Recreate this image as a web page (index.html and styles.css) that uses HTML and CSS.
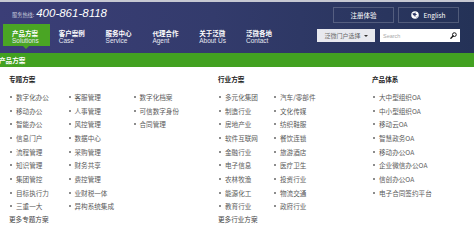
FILE: index.html
```html
<!DOCTYPE html>
<html lang="zh-CN">
<head>
    <meta charset="UTF-8">
    <meta name="viewport" content="width=device-width, initial-scale=1.0">
    <title>泛微 产品方案</title>
    <link rel="stylesheet" href="styles.css">
</head>
<body>
    <header class="top">
        <div class="top-left">
            <div class="hotline">
                <span class="hotline-label">服务热线:</span>
                <span class="hotline-num">400-861-8118</span>
            </div>
            <nav class="nav">
                <a class="nav-item active" href="#"><b>产品方案</b><span>Solutions</span></a>
                <a class="nav-item" href="#"><b>客户案例</b><span>Case</span></a>
                <a class="nav-item" href="#"><b>服务中心</b><span>Service</span></a>
                <a class="nav-item" href="#"><b>代理合作</b><span>Agent</span></a>
                <a class="nav-item" href="#"><b>关于泛微</b><span>About Us</span></a>
                <a class="nav-item" href="#"><b>泛微各地</b><span>Contact</span></a>
            </nav>
        </div>
        <div class="top-right">
            <div class="btns">
                <a class="btn" href="#">注册体验</a>
                <a class="btn" href="#">
                    <svg class="globe" viewBox="0 0 16 16" width="8" height="8">
                        <circle cx="8" cy="8" r="7.5" fill="#fff"/>
                        <path d="M3 4.5c1.5-.5 2.5.5 3.5 0s1-1.8 2.5-1.5c.6.9-.4 1.8.3 2.6.9.8 2 .2 2.4 1.4-.6 1-1.9.6-2.6 1.5-.5.9.3 2.2-.6 3-1 .4-1.4-.8-1.600-1.8-.3-1.1-1.8-1-2.6-1.8C3.7 7 3.2 5.8 3 4.5z" fill="#2e3766"/>
                        <path d="M11.5 11.5c.8-.6 1.5-.2 1.7.4-.4.8-1.1 1.4-1.900 1.6-.3-.6-.3-1.4.2-2z" fill="#2e3766"/>
                    </svg>
                    English
                </a>
            </div>
            <div class="tools">
                <div class="portal">泛微门户选择 <i class="caret"></i></div>
                <div class="search">
                    <span>Search</span>
                    <svg viewBox="0 0 16 16" width="7" height="7">
                        <circle cx="10" cy="6" r="4.3" fill="none" stroke="#111" stroke-width="2.2"/>
                        <path d="M7 9.2L2 14.2" stroke="#111" stroke-width="3" stroke-linecap="round"/>
                    </svg>
                </div>
            </div>
        </div>
    </header>

    <div class="subbar"><span>产品方案</span></div>

    <main class="menu">
        <section class="sec sec-topic">
            <h3>专题方案</h3>
            <div class="cols">
                <ul class="col-a">
                    <li>数字化办公</li>
                    <li>移动办公</li>
                    <li>智能办公</li>
                    <li>信息门户</li>
                    <li>流程管理</li>
                    <li>知识管理</li>
                    <li>集团管控</li>
                    <li>目标执行力</li>
                    <li>三重一大</li>
                </ul>
                <ul class="col-b">
                    <li>客服管理</li>
                    <li>人事管理</li>
                    <li>风控管理</li>
                    <li>数据中心</li>
                    <li>采购管理</li>
                    <li>财务共享</li>
                    <li>费控管理</li>
                    <li>业财税一体</li>
                    <li>异构系统集成</li>
                </ul>
                <ul>
                    <li>数字化档案</li>
                    <li>可信数字身份</li>
                    <li>合同管理</li>
                </ul>
            </div>
            <a class="more" href="#">更多专题方案</a>
        </section>

        <section class="sec sec-industry">
            <h3>行业方案</h3>
            <div class="cols">
                <ul class="col-c">
                    <li>多元化集团</li>
                    <li>制造行业</li>
                    <li>房地产业</li>
                    <li>软件互联网</li>
                    <li>金融行业</li>
                    <li>电子信息</li>
                    <li>农林牧渔</li>
                    <li>能源化工</li>
                    <li>教育行业</li>
                </ul>
                <ul>
                    <li>汽车/零部件</li>
                    <li>文化传媒</li>
                    <li>纺织鞋服</li>
                    <li>餐饮连锁</li>
                    <li>旅游酒店</li>
                    <li>医疗卫生</li>
                    <li>投资行业</li>
                    <li>物流交通</li>
                    <li>政府行业</li>
                </ul>
            </div>
            <a class="more" href="#">更多行业方案</a>
        </section>

        <section class="sec sec-product">
            <h3>产品体系</h3>
            <ul>
                <li>大中型组织OA</li>
                <li>中小型组织OA</li>
                <li>移动云OA</li>
                <li>智慧政务OA</li>
                <li>移动办公OA</li>
                <li>企业微信办公OA</li>
                <li>信创办公OA</li>
                <li>电子合同签约平台</li>
            </ul>
        </section>
    </main>
</body>
</html>
```

FILE: styles.css
```css
* {
    box-sizing: border-box;
}

html, body {
    margin: 0;
    background: #fff;
}

body {
    width: 474px;
    height: 251px;
    overflow: hidden;
    font-family: "Noto Sans CJK SC", "Noto Sans", sans-serif;
}

a {
    color: inherit;
    text-decoration: none;
}

/* header */
.top {
    display: flex;
    justify-content: space-between;
    height: 53px;
    border-top: 2px solid #c6c8d2;
    background: linear-gradient(to right, #3b3e77, #333b6c 45%, #243257);
}

.top-left {
    padding-left: 3px;
}

.hotline {
    height: 22px;
    display: flex;
    align-items: center;
    padding-left: 9px;
    color: #fff;
}

.hotline-label {
    font-size: 5.2px;
    color: #c9cbdc;
    margin: 2px 2px 0 0;
}

.hotline-num {
    font: italic 11.5px "Liberation Sans", sans-serif;
}

.nav {
    display: flex;
}

.nav-item {
    position: relative;
    width: 46.8px;
    height: 22px;
    padding: 4px 0 0 9px;
    display: flex;
    flex-direction: column;
    justify-content: center;
    color: #fff;
}

.nav-item b {
    font-size: 6.5px;
    line-height: 7px;
}

.nav-item span {
    font: 6.5px/7px "Liberation Sans", sans-serif;
    color: #e6e8f2;
}

.nav-item.active {
    background: #4aa524;
}

.nav-item.active::after {
    content: "";
    position: absolute;
    left: 20px;
    bottom: -3px;
    border: 3px solid transparent;
    border-top-color: #4aa524;
    border-bottom: 0;
}

.top-right {
    display: flex;
    flex-direction: column;
    align-items: flex-end;
    padding: 5px 14px 0 0;
}

.btns {
    display: flex;
    gap: 4px;
    margin-right: 1px;
}

.btn {
    width: 61px;
    height: 16px;
    display: flex;
    align-items: center;
    justify-content: center;
    gap: 4px;
    border: 1px solid rgba(255, 255, 255, 0.2);
    color: #fff;
    font-size: 6.5px;
}

.tools {
    display: flex;
    gap: 5px;
    margin-top: 6px;
}

.portal {
    width: 58px;
    height: 13px;
    display: flex;
    align-items: center;
    justify-content: center;
    gap: 3px;
    background: #e8e9ef;
    color: #666;
    font-size: 6px;
}

.caret {
    border: 2px solid transparent;
    border-top: 2.5px solid #333;
    border-bottom: 0;
}

.search {
    width: 80px;
    height: 13px;
    display: flex;
    align-items: center;
    justify-content: space-between;
    padding: 0 3px 0 3px;
    background: #fff;
    color: #aaa;
    font: 5.5px "Liberation Sans", sans-serif;
}

/* green bar */
.subbar {
    height: 14px;
    background: #42a121;
    color: #fff;
    font-size: 6.6px;
    font-weight: bold;
    line-height: 14px;
}

.subbar span {
    margin-left: -1px;
}

/* dropdown menu */
.menu {
    display: flex;
    padding: 7px 0 0 9px;
}

.sec-topic {
    width: 209px;
}

.sec-industry {
    width: 154px;
}

.sec-product {
    flex: 1;
}

.sec h3 {
    margin: 0 0 6px;
    font-size: 6.6px;
    line-height: 10px;
    font-weight: bold;
    color: #222;
}

.cols {
    display: flex;
}

ul {
    list-style: none;
    margin: 0;
    padding: 0;
}

.col-a {
    width: 58.5px;
}

.col-b {
    width: 65px;
}

.col-c {
    width: 55px;
}

li {
    height: 13.7px;
    display: flex;
    align-items: center;
    font-size: 6.6px;
    color: #5a5a5a;
}

li::before {
    content: "";
    width: 2px;
    height: 2px;
    margin: 0 4px 0 1px;
    border-radius: 50%;
    background: #666;
}

.more {
    display: block;
    margin-top: 0.3px;
    font-size: 6.6px;
    line-height: 13.7px;
    color: #444;
}
```
